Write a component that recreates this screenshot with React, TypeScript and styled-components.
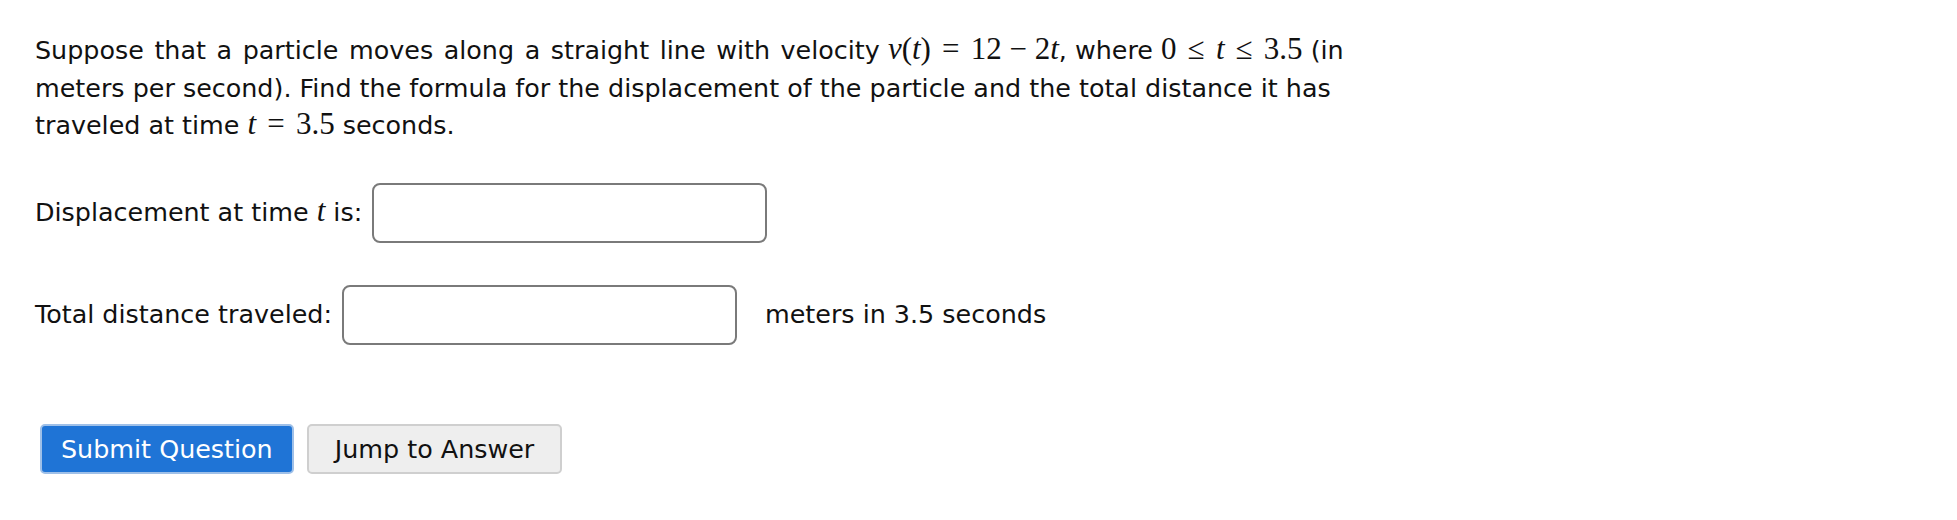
import React from "react";
import styled, { createGlobalStyle } from "styled-components";

const GlobalStyle = createGlobalStyle`
  body {
    margin: 0;
    background: #ffffff;
    font-family: "DejaVu Sans", sans-serif;
    color: #111;
  }
`;

const Page = styled.div`
  padding: 32px 0 0 35px;
  font-size: 25.4px;
  line-height: 37.5px;
`;

const Problem = styled.p`
  margin: 0 0 38px;
`;

const Lead = styled.span`
  word-spacing: 2.5px;
`;

const M = styled.span`
  font-family: "Liberation Serif", "DejaVu Serif", serif;
  font-size: 31px;
  line-height: 1;
`;

const Op = styled.span<{ $rel?: boolean }>`
  margin: 0 ${(p) => (p.$rel ? 0.36 : 0.25)}em;
`;

const Row = styled.div<{ $gap?: number }>`
  display: flex;
  align-items: center;
  margin-bottom: ${(p) => p.$gap ?? 42}px;
`;

const Label = styled.span`
  margin-right: 10px;
`;

const AnswerInput = styled.input`
  width: 395px;
  height: 60px;
  box-sizing: border-box;
  border: 2px solid #7a7a7a;
  border-radius: 8px;
  background: #fff;
  font-size: 22px;
  padding: 0 10px;
`;

const Units = styled.span`
  margin-left: 28px;
`;

const Buttons = styled.div`
  display: flex;
  gap: 13px;
  margin-top: 79px;
  padding-left: 5px;
`;

const Button = styled.button<{ $primary?: boolean; $pad: number }>`
  height: 50px;
  box-sizing: border-box;
  padding: 0 ${(p) => p.$pad}px;
  border-radius: 5px;
  font-family: inherit;
  font-size: 25.4px;
  cursor: pointer;
  border: 2px solid ${(p) => (p.$primary ? "#9fc0e8" : "#cfcfcf")};
  background: ${(p) => (p.$primary ? "#1f74d6" : "#eeeeee")};
  color: ${(p) => (p.$primary ? "#ffffff" : "#111111")};
`;

export default function App() {
  return (
    <>
      <GlobalStyle />
      <Page>
        <Problem>
          <Lead>Suppose that a particle moves along a straight line with velocity</Lead>{" "}
          <M>
            <i>v</i>(<i>t</i>)<Op $rel>=</Op>12<Op>−</Op>2<i>t</i>
          </M>
          , where{" "}
          <M>
            0<Op $rel>≤</Op>
            <i>t</i>
            <Op $rel>≤</Op>3.5
          </M>{" "}
          (in
          <br />
          meters per second). Find the formula for the displacement of the particle and the total distance it has
          <br />
          traveled at time{" "}
          <M>
            <i>t</i>
            <Op $rel>=</Op>3.5
          </M>{" "}
          seconds.
        </Problem>
        <Row>
          <Label>
            Displacement at time{" "}
            <M>
              <i>t</i>
            </M>{" "}
            is:
          </Label>
          <AnswerInput type="text" />
        </Row>
        <Row $gap={0}>
          <Label>Total distance traveled:</Label>
          <AnswerInput type="text" />
          <Units>meters in 3.5 seconds</Units>
        </Row>
        <Buttons>
          <Button $primary $pad={19}>
            Submit Question
          </Button>
          <Button $pad={26}>Jump to Answer</Button>
        </Buttons>
      </Page>
    </>
  );
}
